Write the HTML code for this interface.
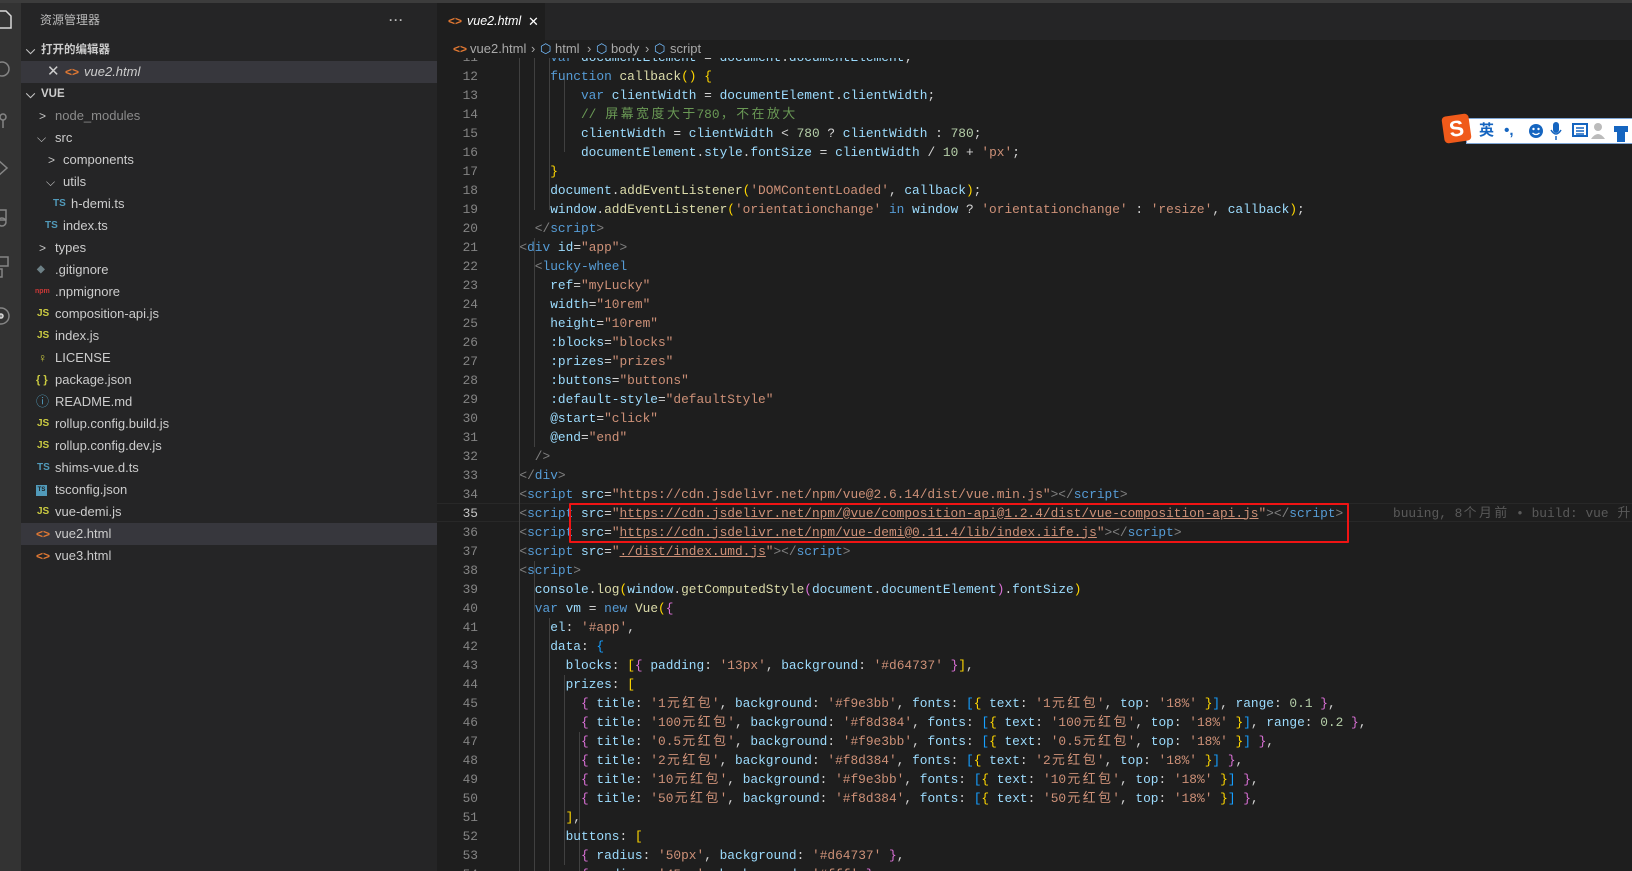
<!DOCTYPE html>
<html><head><meta charset="utf-8"><style>
*{margin:0;padding:0;box-sizing:border-box}
body{width:1632px;height:871px;background:#1e1e1e;overflow:hidden;position:relative;font-family:"Liberation Sans","Noto Sans CJK SC",sans-serif;color:#ccc}
#top{position:absolute;left:0;top:0;width:1632px;height:3px;background:#3c3c3c}
#act{position:absolute;left:0;top:3px;width:21px;height:868px;background:#333}
#side{position:absolute;left:21px;top:3px;width:416px;height:868px;background:#252526}
.r{position:absolute;left:0;width:416px;height:22px;line-height:22px;font-size:13px;color:#ccc;white-space:nowrap}
.r .ic{position:absolute;top:0;font-size:10px;font-weight:bold;font-family:"Liberation Sans",sans-serif}
.r .tx{position:absolute;top:0}
.js{color:#cbcb41}.ts{color:#519aba}.ht{color:#e37933;font-size:12px!important}
.chev{position:absolute;top:0;color:#c5c5c5;font-size:12px}
#tabs{position:absolute;left:437px;top:3px;width:1195px;height:37px;background:#252526}
#tab{position:absolute;left:437px;top:3px;width:108px;height:37px;background:#1e1e1e;font-size:12.5px;line-height:37px;color:#fff}
#crumb{position:absolute;left:437px;top:40px;height:18px;font-size:13px;line-height:18px;color:#a9a9a9;white-space:nowrap}
#ed{position:absolute;left:437px;top:58px;width:1195px;height:813px;overflow:hidden}
.ln{position:absolute;left:0;width:41px;text-align:right;font-family:"Liberation Mono",monospace;font-size:12.83px;color:#858585;height:19px;line-height:19px}
.cl{position:absolute;left:82.4px;height:19px;line-height:19px;font-family:"Liberation Mono","Noto Sans CJK SC",monospace;font-size:12.83px;white-space:pre;color:#d4d4d4}
.z{display:inline-block;width:15.4px;font-style:normal;text-align:center}
.p{color:#808080}.t{color:#569cd6}.a{color:#9cdcfe}.s{color:#ce9178}.k{color:#569cd6}.f{color:#dcdcaa}.v{color:#9cdcfe}.c{color:#6a9955}.n{color:#b5cea8}.y{color:#ffd700}.m{color:#da70d6}.b{color:#179fff}.u{text-decoration:underline;text-decoration-color:#ce9178}
.g{position:absolute;width:1px;background:#404040}
</style></head><body>
<div id="top"></div>
<div id="act">
<svg width="21" height="340" style="position:absolute;top:0;left:0" fill="none" stroke="#d7d7d7" stroke-width="1.5">
<path d="M-4 8 h10 l5 5 v12 h-15z"/>
<circle cx="2" cy="66" r="7" stroke="#858585"/>
<circle cx="3" cy="114" r="3" stroke="#858585"/><path d="M3 117 v8" stroke="#858585"/>
<path d="M-2 157 l9 8 l-9 8" stroke="#858585"/>
<rect x="-4" y="207" width="10" height="10" stroke="#858585"/><circle cx="2" cy="219" r="4" stroke="#858585"/>
<rect x="-4" y="254" width="12" height="9" stroke="#858585"/><rect x="-4" y="266" width="6" height="8" stroke="#858585"/>
<circle cx="1" cy="313" r="8" stroke="#858585"/><circle cx="1" cy="313" r="2" fill="#858585"/>
</svg></div>
<div id="side">
<div class="r" style="top:6px;font-size:12px;color:#bbb"><span class="tx" style="left:19px">资源管理器</span><span class="tx" style="left:368px;letter-spacing:1px;font-weight:bold">···</span></div>
<div class="r" style="top:36px;font-weight:bold;font-size:11.5px"><span class="chev" style="left:5px">⌵</span><span class="tx" style="left:20px">打开的编辑器</span></div>
<div class="r" style="top:58px;background:#37373d"><span class="tx" style="left:26px;font-size:15px">✕</span><span class="ic ht" style="left:44px">&lt;&gt;</span><span class="tx" style="left:63px;font-style:italic">vue2.html</span></div>
<div class="r" style="top:80px;font-weight:bold;font-size:11.5px"><span class="chev" style="left:5px">⌵</span><span class="tx" style="left:20px">VUE</span></div>
<div class="r" style="top:102px;color:#8b8b8b"><span class="chev" style="left:18px">&gt;</span><span class="tx" style="left:34px">node_modules</span></div>
<div class="r" style="top:124px"><span class="chev" style="left:16px">⌵</span><span class="tx" style="left:34px">src</span></div>
<div class="r" style="top:146px"><span class="chev" style="left:27px">&gt;</span><span class="tx" style="left:42px">components</span></div>
<div class="r" style="top:168px"><span class="chev" style="left:25px">⌵</span><span class="tx" style="left:42px">utils</span></div>
<div class="r" style="top:190px"><span class="ic ts" style="left:32px">TS</span><span class="tx" style="left:50px">h-demi.ts</span></div>
<div class="r" style="top:212px"><span class="ic ts" style="left:24px">TS</span><span class="tx" style="left:42px">index.ts</span></div>
<div class="r" style="top:234px"><span class="chev" style="left:18px">&gt;</span><span class="tx" style="left:34px">types</span></div>
<div class="r" style="top:256px"><span class="ic" style="left:16px;color:#6d8086">◆</span><span class="tx" style="left:34px">.gitignore</span></div>
<div class="r" style="top:278px"><span class="ic" style="left:14px;color:#cb3837;font-size:7px">npm</span><span class="tx" style="left:34px">.npmignore</span></div>
<div class="r" style="top:300px"><span class="ic js" style="left:16px">JS</span><span class="tx" style="left:34px">composition-api.js</span></div>
<div class="r" style="top:322px"><span class="ic js" style="left:16px">JS</span><span class="tx" style="left:34px">index.js</span></div>
<div class="r" style="top:344px"><span class="ic" style="left:17px;color:#cbcb41;font-size:12px">♀</span><span class="tx" style="left:34px">LICENSE</span></div>
<div class="r" style="top:366px"><span class="ic" style="left:15px;color:#cbcb41;font-size:11px">{ }</span><span class="tx" style="left:34px">package.json</span></div>
<div class="r" style="top:388px"><span class="ic" style="left:15px;color:#519aba;font-size:13px;font-weight:normal">ⓘ</span><span class="tx" style="left:34px">README.md</span></div>
<div class="r" style="top:410px"><span class="ic js" style="left:16px">JS</span><span class="tx" style="left:34px">rollup.config.build.js</span></div>
<div class="r" style="top:432px"><span class="ic js" style="left:16px">JS</span><span class="tx" style="left:34px">rollup.config.dev.js</span></div>
<div class="r" style="top:454px"><span class="ic ts" style="left:16px">TS</span><span class="tx" style="left:34px">shims-vue.d.ts</span></div>
<div class="r" style="top:476px"><span class="ic" style="left:15px;top:6px;width:11px;height:11px;background:#519aba;color:#1e1e1e;font-size:6px;line-height:11px;text-align:center">TS</span><span class="tx" style="left:34px">tsconfig.json</span></div>
<div class="r" style="top:498px"><span class="ic js" style="left:16px">JS</span><span class="tx" style="left:34px">vue-demi.js</span></div>
<div class="r" style="top:520px;background:#37373d"><span class="ic ht" style="left:15px">&lt;&gt;</span><span class="tx" style="left:34px">vue2.html</span></div>
<div class="r" style="top:542px"><span class="ic ht" style="left:15px">&lt;&gt;</span><span class="tx" style="left:34px">vue3.html</span></div>
</div>
<div id="tabs"></div>
<div id="tab"><span style="position:absolute;left:11px;color:#e37933;font-size:12px;font-weight:bold">&lt;&gt;</span><span style="position:absolute;left:30px;font-style:italic">vue2.html</span><span style="position:absolute;left:91px;font-size:13px">✕</span></div>
<div id="crumb"><span style="position:absolute;left:16px;color:#e37933;font-size:12px;font-weight:bold">&lt;&gt;</span><span style="position:absolute;left:33px">vue2.html</span><span style="position:absolute;left:94px">›</span><span style="position:absolute;left:103px;color:#75beff">⬡</span><span style="position:absolute;left:118px">html</span><span style="position:absolute;left:150px">›</span><span style="position:absolute;left:159px;color:#75beff">⬡</span><span style="position:absolute;left:174px">body</span><span style="position:absolute;left:208px">›</span><span style="position:absolute;left:217px;color:#75beff">⬡</span><span style="position:absolute;left:233px">script</span></div>
<div id="ed">
<div style="position:absolute;left:0;top:445px;width:1195px;height:19px;border-top:1px solid #282828;border-bottom:1px solid #282828"></div>
<div class="g" style="left:82px;top:0;height:813px"></div>
<div class="g" style="left:97px;top:0;height:152px"></div>
<div class="g" style="left:112px;top:0;height:152px"></div>
<div class="g" style="left:127px;top:18px;height:76px"></div>
<div class="g" style="left:97px;top:180px;height:209px"></div>
<div class="g" style="left:97px;top:503px;height:310px"></div>
<div class="g" style="left:112px;top:560px;height:253px"></div>
<div class="g" style="left:127px;top:617px;height:190px"></div>
<div class="g" style="left:142px;top:674px;height:114px"></div>
<div class="g" style="left:142px;top:788px;height:25px"></div>
<div id="code"></div>
<div style="position:absolute;left:132px;top:445px;width:780px;height:40px;border:2px solid #f01414;border-radius:1px"></div>
<div class="cl" style="left:956px;top:446px;color:#5a5a5a">buuing, 8<i class="z">个</i><i class="z">月</i><i class="z">前</i> • build: vue <i class="z">升</i><i class="z">级</i></div>
</div>
<div style="position:absolute;left:1466px;top:118px;width:170px;height:26px;background:#fff;border:1px solid #7fa6d6;border-right:none"></div>
<div style="position:absolute;left:1443px;top:115px;width:27px;height:27px;background:#f05a1a;border-radius:4px;transform:rotate(-8deg);color:#fff;font:bold 22px/27px 'Liberation Sans',sans-serif;text-align:center">S</div>
<div style="position:absolute;left:1479px;top:119px;font:bold 15px/24px 'Liberation Sans','Noto Sans CJK SC',sans-serif;color:#1565c0;white-space:nowrap">英 <span style="margin-left:6px">•,</span></div>
<svg style="position:absolute;left:1526px;top:120px" width="106" height="22">
<circle cx="10" cy="11" r="7" fill="#1565c0"/><circle cx="7.5" cy="9" r="1.2" fill="#fff"/><circle cx="12.5" cy="9" r="1.2" fill="#fff"/><path d="M6.5 13 q3.5 3 7 0" stroke="#fff" fill="none" stroke-width="1.3"/>
<rect x="27" y="2" width="6" height="11" rx="3" fill="#1565c0"/><path d="M25 10 q5 8 10 0 M30 16 v4" stroke="#1565c0" fill="none" stroke-width="1.5"/>
<rect x="47" y="4" width="14" height="12" fill="none" stroke="#1565c0" stroke-width="2"/><path d="M50 8 h8 M50 11 h8 M50 14 h8" stroke="#1565c0" stroke-width="1.5"/>
<circle cx="72" cy="7" r="4" fill="#bbb"/><path d="M65 19 q7 -10 14 0z" fill="#bbb"/>
<path d="M88 6 h14 v6 h-3 v10 h-8 v-10 h-3z" fill="#1565c0"/>
</svg>
<script>
const L={
11:'    <span class="k">var</span> <span class="v">documentElement</span> = <span class="v">document</span>.<span class="v">documentElement</span>;',
12:'    <span class="k">function</span> <span class="f">callback</span><span class="y">()</span> <span class="y">{</span>',
13:'        <span class="k">var</span> <span class="v">clientWidth</span> = <span class="v">documentElement</span>.<span class="v">clientWidth</span>;',
14:'        <span class="c">// Z屏Z幕Z宽Z度Z大Z于780Z，Z不Z在Z放Z大</span>',
15:'        <span class="v">clientWidth</span> = <span class="v">clientWidth</span> &lt; <span class="n">780</span> ? <span class="v">clientWidth</span> : <span class="n">780</span>;',
16:'        <span class="v">documentElement</span>.<span class="v">style</span>.<span class="v">fontSize</span> = <span class="v">clientWidth</span> / <span class="n">10</span> + <span class="s">\'px\'</span>;',
17:'    <span class="y">}</span>',
18:'    <span class="v">document</span>.<span class="f">addEventListener</span><span class="y">(</span><span class="s">\'DOMContentLoaded\'</span>, <span class="v">callback</span><span class="y">)</span>;',
19:'    <span class="v">window</span>.<span class="f">addEventListener</span><span class="y">(</span><span class="s">\'orientationchange\'</span> <span class="k">in</span> <span class="v">window</span> ? <span class="s">\'orientationchange\'</span> : <span class="s">\'resize\'</span>, <span class="v">callback</span><span class="y">)</span>;',
20:'  <span class="p">&lt;/</span><span class="t">script</span><span class="p">&gt;</span>',
21:'<span class="p">&lt;</span><span class="t">div</span> <span class="a">id</span>=<span class="s">"app"</span><span class="p">&gt;</span>',
22:'  <span class="p">&lt;</span><span class="t">lucky-wheel</span>',
23:'    <span class="a">ref</span>=<span class="s">"myLucky"</span>',
24:'    <span class="a">width</span>=<span class="s">"10rem"</span>',
25:'    <span class="a">height</span>=<span class="s">"10rem"</span>',
26:'    <span class="a">:blocks</span>=<span class="s">"blocks"</span>',
27:'    <span class="a">:prizes</span>=<span class="s">"prizes"</span>',
28:'    <span class="a">:buttons</span>=<span class="s">"buttons"</span>',
29:'    <span class="a">:default-style</span>=<span class="s">"defaultStyle"</span>',
30:'    <span class="a">@start</span>=<span class="s">"click"</span>',
31:'    <span class="a">@end</span>=<span class="s">"end"</span>',
32:'  <span class="p">/&gt;</span>',
33:'<span class="p">&lt;/</span><span class="t">div</span><span class="p">&gt;</span>',
34:'<span class="p">&lt;</span><span class="t">script</span> <span class="a">src</span>=<span class="s">"https://cdn.jsdelivr.net/npm/vue@2.6.14/dist/vue.min.js"</span><span class="p">&gt;&lt;/</span><span class="t">script</span><span class="p">&gt;</span>',
35:'<span class="p">&lt;</span><span class="t">script</span> <span class="a">src</span>=<span class="s">"<span class="u">https://cdn.jsdelivr.net/npm/@vue/composition-api@1.2.4/dist/vue-composition-api.js</span>"</span><span class="p">&gt;&lt;/</span><span class="t">script</span><span class="p">&gt;</span>',
36:'<span class="p">&lt;</span><span class="t">script</span> <span class="a">src</span>=<span class="s">"<span class="u">https://cdn.jsdelivr.net/npm/vue-demi@0.11.4/lib/index.iife.js</span>"</span><span class="p">&gt;&lt;/</span><span class="t">script</span><span class="p">&gt;</span>',
37:'<span class="p">&lt;</span><span class="t">script</span> <span class="a">src</span>=<span class="s">"<span class="u">./dist/index.umd.js</span>"</span><span class="p">&gt;&lt;/</span><span class="t">script</span><span class="p">&gt;</span>',
38:'<span class="p">&lt;</span><span class="t">script</span><span class="p">&gt;</span>',
39:'  <span class="v">console</span>.<span class="f">log</span><span class="y">(</span><span class="v">window</span>.<span class="f">getComputedStyle</span><span class="m">(</span><span class="v">document</span>.<span class="v">documentElement</span><span class="m">)</span>.<span class="v">fontSize</span><span class="y">)</span>',
40:'  <span class="k">var</span> <span class="v">vm</span> = <span class="k">new</span> <span class="f">Vue</span><span class="y">(</span><span class="m">{</span>',
41:'    <span class="v">el</span>: <span class="s">\'#app\'</span>,',
42:'    <span class="v">data</span>: <span class="b">{</span>',
43:'      <span class="v">blocks</span>: <span class="y">[</span><span class="m">{</span> <span class="v">padding</span>: <span class="s">\'13px\'</span>, <span class="v">background</span>: <span class="s">\'#d64737\'</span> <span class="m">}</span><span class="y">]</span>,',
44:'      <span class="v">prizes</span>: <span class="y">[</span>'
};
const P=[['1','#f9e3bb',', <span class="v">range</span>: <span class="n">0.1</span> '],['100','#f8d384',', <span class="v">range</span>: <span class="n">0.2</span> '],['0.5','#f9e3bb',' '],['2','#f8d384',' '],['10','#f9e3bb',' '],['50','#f8d384',' ']];
P.forEach((q,i)=>{const nm='\''+q[0]+'Z元Z红Z包\'';L[45+i]='        <span class="m">{</span> <span class="v">title</span>: <span class="s">'+nm+'</span>, <span class="v">background</span>: <span class="s">\''+q[1]+'\'</span>, <span class="v">fonts</span>: <span class="b">[</span><span class="y">{</span> <span class="v">text</span>: <span class="s">'+nm+'</span>, <span class="v">top</span>: <span class="s">\'18%\'</span> <span class="y">}</span><span class="b">]</span>'+q[2]+'<span class="m">}</span>,';});
L[51]='      <span class="y">]</span>,';
L[52]='      <span class="v">buttons</span>: <span class="y">[</span>';
L[53]='        <span class="m">{</span> <span class="v">radius</span>: <span class="s">\'50px\'</span>, <span class="v">background</span>: <span class="s">\'#d64737\'</span> <span class="m">}</span>,';
L[54]='        <span class="m">{</span> <span class="v">radius</span>: <span class="s">\'45px\'</span>, <span class="v">background</span>: <span class="s">\'#fff\'</span> <span class="m">}</span>,';
let h='';
for(let n=11;n<=54;n++){const top=8.5+(n-12)*19;
h+='<div class="ln" style="top:'+top+'px;'+(n==35?'color:#c6c6c6':'')+'">'+n+'</div>';
h+='<div class="cl" style="top:'+top+'px">'+L[n].replace(/Z(.)/g,'<i class="z">$1</i>')+'</div>';}
document.getElementById('code').innerHTML=h;
</script>
</body></html>
